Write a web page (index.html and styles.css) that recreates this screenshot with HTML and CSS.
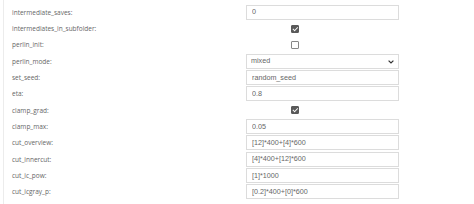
FILE: index.html
```html
<!DOCTYPE html>
<html lang="en">
<head>
    <meta charset="UTF-8">
    <meta name="viewport" content="width=device-width, initial-scale=1.0">
    <title>Settings</title>
    <link rel="stylesheet" href="styles.css">
</head>
<body>
    <div class="panel">
        <div class="settings">
            <label class="name">intermediate_saves:</label>
            <input class="field" type="text" value="0">

            <label class="name">intermediates_in_subfolder:</label>
            <span class="check-cell"><input class="check" type="checkbox" checked></span>

            <label class="name">perlin_init:</label>
            <span class="check-cell"><input class="check" type="checkbox"></span>

            <label class="name">perlin_mode:</label>
            <span class="select-wrap"><select class="field">
                    <option>mixed</option>
                    <option>color</option>
                    <option>gray</option>
                </select><svg class="chevron" width="6" height="4" viewBox="0 0 6 4"><path d="M0.6 0.6 L3 3 L5.4 0.6" fill="none" stroke="#333" stroke-width="1.2"/></svg></span>

            <label class="name">set_seed:</label>
            <input class="field" type="text" value="random_seed">

            <label class="name">eta:</label>
            <input class="field" type="text" value="0.8">

            <label class="name">clamp_grad:</label>
            <span class="check-cell"><input class="check" type="checkbox" checked></span>

            <label class="name">clamp_max:</label>
            <input class="field" type="text" value="0.05">

            <label class="name">cut_overview:</label>
            <input class="field" type="text" value="[12]*400+[4]*600">

            <label class="name">cut_innercut:</label>
            <input class="field" type="text" value="[4]*400+[12]*600">

            <label class="name">cut_ic_pow:</label>
            <input class="field" type="text" value="[1]*1000">

            <label class="name">cut_icgray_p:</label>
            <input class="field" type="text" value="[0.2]*400+[0]*600">
        </div>
    </div>
</body>
</html>
```

FILE: styles.css
```css
/* page */
body {
    margin: 0;
    background-color: #fff;
    font-family: "Open Sans", "Noto Sans", sans-serif;
}
.panel {
    margin-left: 3px;
    border-left: 1px solid #ececec;
    height: 204px;
    padding: 4px 0 0 8px;
    box-sizing: border-box;
}

/* label / control grid */
.settings {
    display: grid;
    grid-template-columns: 234px 153px;
    grid-auto-rows: 16.35px;
    align-items: center;
}
.name {
    font-size: 6.5px;
    color: #666;
    white-space: nowrap;
}
.field {
    display: block;
    box-sizing: border-box;
    width: 153px;
    height: 15px;
    margin: 0;
    padding: 0 5px 1px;
    border: 1px solid #dcdcdc;
    border-radius: 0;
    background-color: #fff;
    font-family: "Liberation Sans", Arial, sans-serif;
    font-size: 7.2px;
    line-height: 12px;
    color: #666;
    outline: none;
}
select.field {
    appearance: none;
    -webkit-appearance: none;
    padding-left: 4px;
}
.select-wrap {
    position: relative;
    display: block;
    height: 15px;
}
.chevron {
    position: absolute;
    right: 5px;
    top: 6px;
}

/* checkboxes */
.check-cell {
    display: flex;
    align-items: center;
    padding-left: 45px;
}
.check {
    appearance: none;
    -webkit-appearance: none;
    width: 8px;
    height: 8px;
    margin: 0;
    border: 1px solid #888;
    border-radius: 1px;
    background-color: #fff;
    position: relative;
}
.check:checked {
    background-color: #5a5a5a;
    border-color: #5a5a5a;
}
.check:checked::after {
    content: '';
    position: absolute;
    left: 1.8px;
    top: 0px;
    width: 1.8px;
    height: 3.6px;
    border: solid #fff;
    border-width: 0 1.1px 1.1px 0;
    transform: rotate(45deg);
}
```
